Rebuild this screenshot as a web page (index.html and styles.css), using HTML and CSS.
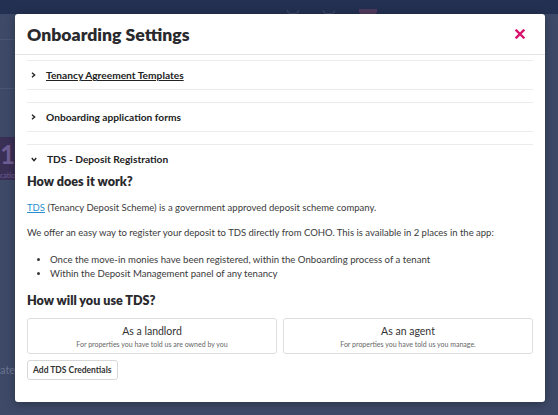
FILE: index.html
```html
<!DOCTYPE html>
<html lang="en">
<head>
  <meta charset="UTF-8">
  <title>Onboarding Settings</title>
  <link rel="stylesheet" href="styles.css">
</head>
<body>

  <div class="app">
    <div class="topbar">
      <span class="top-icon"></span>
      <span class="top-icon"></span>
      <span class="avatar"></span>
    </div>
    <div class="page">
      <div class="side-line"></div>
      <div class="side-line"></div>
      <div class="side-tile"><span>1</span><small>catio</small></div>
      <div class="side-foot">ate</div>
    </div>
  </div>

  <div class="modal">
    <div class="modal-header">
      <h2>Onboarding Settings</h2>
      <button class="close" aria-label="Close">
        <svg width="10" height="10" viewBox="0 0 10 10">
          <path d="M1.5 1.5 L8.5 8.5 M8.5 1.5 L1.5 8.5" stroke="#d8136e" stroke-width="2.4" stroke-linecap="square"/>
        </svg>
      </button>
    </div>

    <div class="modal-body">
      <div class="acc-item">
        <svg class="chev" width="5" height="6" viewBox="0 0 5 6"><path d="M1 0.8 L3.6 3 L1 5.2" fill="none" stroke="#222" stroke-width="1.4"/></svg>
        <a class="acc-link" href="#">Tenancy Agreement Templates</a>
      </div>
      <div class="acc-item">
        <svg class="chev" width="5" height="6" viewBox="0 0 5 6"><path d="M1 0.8 L3.6 3 L1 5.2" fill="none" stroke="#222" stroke-width="1.4"/></svg>
        <span>Onboarding application forms</span>
      </div>
      <div class="acc-item open">
        <svg class="chev" width="6" height="5" viewBox="0 0 6 5"><path d="M0.8 1 L3 3.6 L5.2 1" fill="none" stroke="#222" stroke-width="1.4"/></svg>
        <span>TDS - Deposit Registration</span>
      </div>

      <h3>How does it work?</h3>
      <p><a class="tds" href="#">TDS</a> (Tenancy Deposit Scheme) is a government approved deposit scheme company.</p>
      <p class="places">We offer an easy way to register your deposit to TDS directly from COHO. This is available in 2 places in the app:</p>
      <ul>
        <li>Once the move-in monies have been registered, within the Onboarding process of a tenant</li>
        <li>Within the Deposit Management panel of any tenancy</li>
      </ul>

      <h3 class="use">How will you use TDS?</h3>
      <div class="choices">
        <div class="choice">
          <div class="choice-title">As a landlord</div>
          <div class="choice-sub">For properties you have told us are owned by you</div>
        </div>
        <div class="choice">
          <div class="choice-title">As an agent</div>
          <div class="choice-sub">For properties you have told us you manage.</div>
        </div>
      </div>
      <button class="creds">Add TDS Credentials</button>
    </div>
  </div>

</body>
</html>
```

FILE: styles.css
```css
body {
  margin: 0;
  font-family: Lato, "Noto Sans", sans-serif;
  color: #333;
  width: 558px;
  height: 415px;
  overflow: hidden;
  position: relative;
  background: #3d4967;
}

.app {
  height: 100%;
}

.topbar {
  height: 14px;
  background: #243051;
  display: flex;
  justify-content: flex-end;
  align-items: flex-end;
  gap: 24px;
  padding-right: 181px;
}

.top-icon {
  width: 10px;
  height: 3px;
  border-radius: 0 0 5px 5px;
  border: 1px solid #3e4968;
  border-top: none;
}

.avatar {
  width: 18px;
  height: 5px;
  background: #4e3a5e;
  border-radius: 0 0 3px 3px;
}

.page {
  padding-top: 25px;
}

.side-line {
  height: 1px;
  width: 15px;
  background: #4a5572;
  margin-bottom: 48px;
}

.side-tile {
  width: 15px;
  height: 43px;
  background: #3a2f55;
  color: #6f5e93;
  font-weight: 700;
  font-size: 26px;
  line-height: 34px;
  overflow: hidden;
  white-space: nowrap;
}

.side-tile small {
  display: block;
  font-size: 7px;
  line-height: 8px;
  font-weight: 400;
}

.side-foot {
  margin-top: 183px;
  width: 15px;
  font-size: 11px;
  color: #6a7590;
  overflow: hidden;
}

/* modal */
.modal {
  position: absolute;
  left: 15px;
  top: 14px;
  width: 530px;
  height: 388px;
  background: #fff;
  border-radius: 3px;
  box-shadow: 0 2px 10px rgba(0, 0, 0, 0.3);
}

.modal-header {
  height: 40px;
  border-bottom: 1px solid #e4e4e4;
  display: flex;
  align-items: center;
  justify-content: space-between;
  padding: 0 20px 0 12px;
}

.modal-header h2 {
  margin: 0;
  font-size: 17.6px;
  font-weight: 800;
  color: #2a2a2e;
}

.close {
  background: none;
  border: none;
  padding: 0;
  display: flex;
  cursor: pointer;
}

.modal-body {
  padding: 5px 12px 0;
}

.acc-item {
  height: 28px;
  border-top: 1px solid #ececec;
  border-bottom: 1px solid #ececec;
  margin-bottom: 12px;
  display: flex;
  align-items: center;
  font-size: 10.2px;
  font-weight: 700;
  color: #222;
}

.acc-item.open {
  border-bottom: none;
  margin-bottom: 0;
}

.chev {
  margin: 0 10px 0 4px;
  flex-shrink: 0;
}

.acc-link {
  color: #222;
}

h3 {
  margin: 1px 0 13px;
  font-size: 12.6px;
  font-weight: 800;
  color: #2a2a2e;
}

p {
  margin: 0 0 13px;
  font-size: 9.5px;
  line-height: 12px;
  color: #3a3a3a;
}

p.places {
  margin-bottom: 14px;
}

.tds {
  color: #2a8fd0;
}

ul {
  margin: 0 0 12px;
  padding-left: 23px;
  font-size: 9.6px;
  line-height: 14px;
  color: #3a3a3a;
}

h3.use {
  margin-bottom: 10px;
}

.choices {
  display: flex;
  gap: 6px;
}

.choice {
  flex: 1;
  height: 34px;
  border: 1px solid #dedede;
  border-radius: 3px;
  text-align: center;
  display: flex;
  flex-direction: column;
  justify-content: center;
}

.choice-title {
  font-size: 10.5px;
  color: #333;
}

.choice-sub {
  font-size: 7px;
  color: #666;
  margin-top: 3px;
}

.creds {
  margin-top: 6px;
  height: 20px;
  padding: 0 5px;
  background: #fff;
  border: 1px solid #d8d8d8;
  border-radius: 3px;
  font-family: inherit;
  font-size: 8.5px;
  font-weight: 700;
  color: #333;
}
```
